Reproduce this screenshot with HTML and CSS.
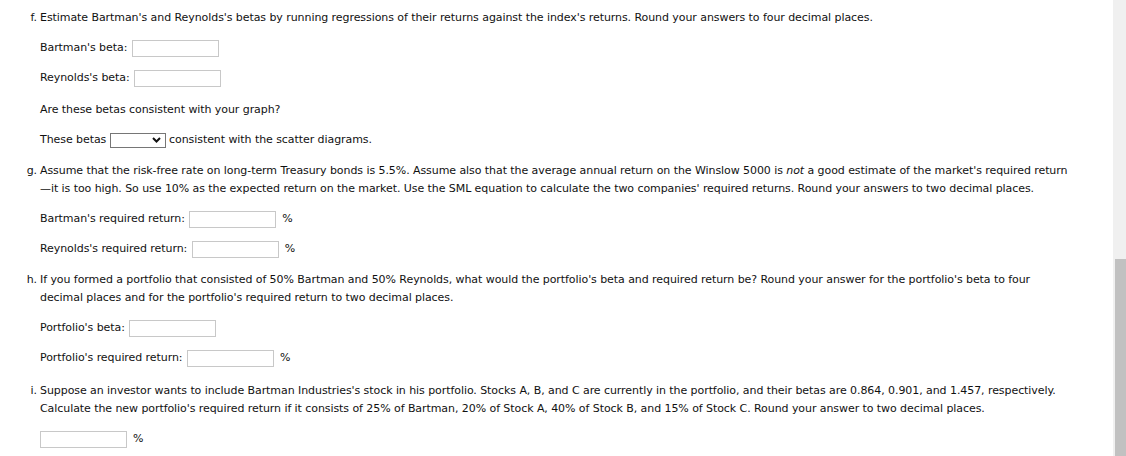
FILE: index.html
```html
<!DOCTYPE html>
<html>
<head>
<meta charset="utf-8">
<link rel="stylesheet" href="styles.css">
</head>
<body>
<div class="page">
  <main class="content">
    <section class="q">
      <p class="qline"><span class="lbl">f.</span><span class="qtext">Estimate Bartman's and Reynolds's betas by running regressions of their returns against the index's returns. Round your answers to four decimal places.</span></p>
      <div class="row">Bartman's beta: <span class="inp"></span></div>
      <div class="row">Reynolds's beta: <span class="inp"></span></div>
      <div class="row gap">Are these betas consistent with your graph?</div>
      <div class="row">These betas <span class="sel"><svg class="chev" width="9" height="6" viewBox="0 0 9 6"><path d="M1 1 L4.5 4.5 L8 1" fill="none" stroke="#111" stroke-width="2"/></svg></span> consistent with the scatter diagrams.</div>
    </section>
    <section class="q">
      <p class="qline"><span class="lbl">g.</span><span class="qtext">Assume that the risk-free rate on long-term Treasury bonds is 5.5%. Assume also that the average annual return on the Winslow 5000 is <em>not</em> a good estimate of the market's required return<br>—it is too high. So use 10% as the expected return on the market. Use the SML equation to calculate the two companies' required returns. Round your answers to two decimal places.</span></p>
      <div class="row">Bartman's required return: <span class="inp"></span><span class="pct">%</span></div>
      <div class="row">Reynolds's required return: <span class="inp"></span><span class="pct">%</span></div>
    </section>
    <section class="q">
      <p class="qline"><span class="lbl">h.</span><span class="qtext">If you formed a portfolio that consisted of 50% Bartman and 50% Reynolds, what would the portfolio's beta and required return be? Round your answer for the portfolio's beta to four<br>decimal places and for the portfolio's required return to two decimal places.</span></p>
      <div class="row">Portfolio's beta: <span class="inp"></span></div>
      <div class="row">Portfolio's required return: <span class="inp"></span><span class="pct">%</span></div>
    </section>
    <section class="q last">
      <p class="qline"><span class="lbl">i.</span><span class="qtext">Suppose an investor wants to include Bartman Industries's stock in his portfolio. Stocks A, B, and C are currently in the portfolio, and their betas are 0.864, 0.901, and 1.457, respectively.<br>Calculate the new portfolio's required return if it consists of 25% of Bartman, 20% of Stock A, 40% of Stock B, and 15% of Stock C. Round your answer to two decimal places.</span></p>
      <div class="row"><span class="inp first"></span><span class="pct">%</span></div>
    </section>
  </main>
  <div class="scrollbar"><div class="thumb"></div></div>
</div>
</body>
</html>
```
FILE: styles.css
```css
html, body {
  margin: 0;
  padding: 0;
  background: #fff;
}
body {
  font-family: "DejaVu Sans", sans-serif;
  font-size: 11px;
  line-height: 18px;
  letter-spacing: -0.07px;
  color: #111;
}
.page {
  display: flex;
  width: 1126px;
  height: 456px;
  overflow: hidden;
}
.content {
  flex: 1;
  padding-top: 9px;
}
.q {
  margin-bottom: 13px;
}
.q.last {
  margin-top: 15px;
}
.qline {
  margin: 0;
  display: flex;
}
.lbl {
  width: 37px;
  text-align: right;
  padding-right: 3px;
  flex: none;
}
.qtext {
  width: 1066px;
  white-space: nowrap;
}
.qtext em {
  font-style: italic;
}
.row {
  margin: 12px 0 0 40px;
  height: 18px;
  display: flex;
  align-items: center;
  white-space: pre;
}
.row.gap {
  margin-top: 14px;
}
.inp {
  display: inline-block;
  box-sizing: border-box;
  width: 87px;
  height: 17px;
  border: 1px solid #c8c8c8;
  margin-left: 1px;
}
.inp.first {
  margin-left: 0;
}
.pct {
  margin-left: 6px;
}
.sel {
  display: inline-flex;
  align-items: center;
  justify-content: flex-end;
  box-sizing: border-box;
  width: 56px;
  height: 15px;
  border: 1px solid #767676;
  padding-right: 4px;
}
.scrollbar {
  width: 13px;
  flex: none;
  background: #f0f0f0;
  display: flex;
  flex-direction: column;
  justify-content: flex-end;
}
.thumb {
  margin-left: 2px;
  height: 197px;
  background: #c1c1c1;
}
```
